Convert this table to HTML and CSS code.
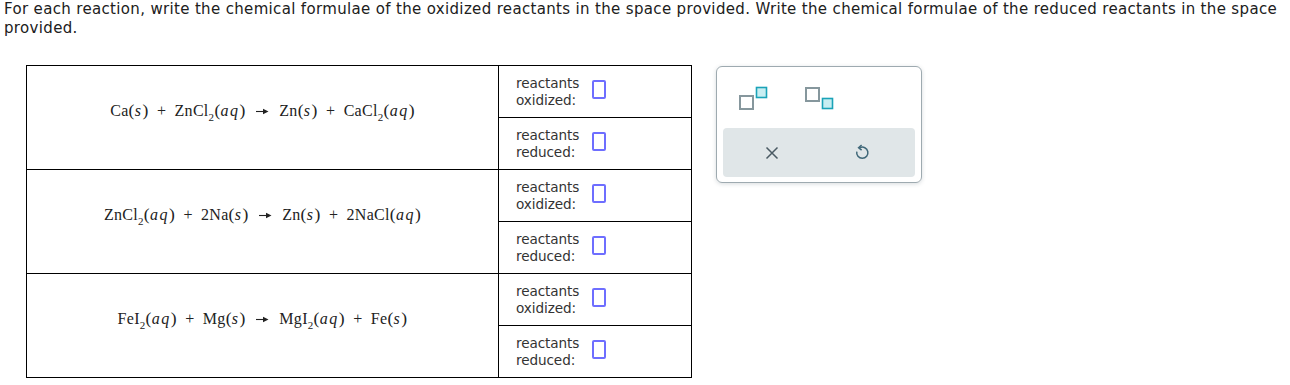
FILE: index.html
```html
<!DOCTYPE html>
<html>
<head>
<meta charset="utf-8">
<link rel="stylesheet" href="styles.css">
</head>
<body>
<p class="prompt">For each reaction, write the chemical formulae of the oxidized reactants in the space provided. Write the chemical formulae of the reduced reactants in the space provided.</p>
<div class="work">
  <table class="rx">
    <tr>
      <td class="eq" rowspan="2"><span class="m">Ca<span class="p">(</span><i>s</i><span class="p">)</span> <span class="op">+</span> ZnCl<sub>2</sub><span class="p">(</span><i>aq</i><span class="p">)</span> <svg class="arr" width="13" height="7" viewBox="0 0 13 7"><path d="M0 3.5 H8" stroke="#222" stroke-width="1.1"/><path d="M7 0.8 L12.5 3.5 L7 6.2 Z" fill="#222"/></svg> Zn<span class="p">(</span><i>s</i><span class="p">)</span> <span class="op">+</span> CaCl<sub>2</sub><span class="p">(</span><i>aq</i><span class="p">)</span></span></td>
      <td class="ans"><div class="lab">reactants<br>oxidized:</div><span class="box"></span></td>
    </tr>
    <tr>
      <td class="ans"><div class="lab">reactants<br>reduced:</div><span class="box"></span></td>
    </tr>
    <tr>
      <td class="eq" rowspan="2"><span class="m">ZnCl<sub>2</sub><span class="p">(</span><i>aq</i><span class="p">)</span> <span class="op">+</span> 2Na<span class="p">(</span><i>s</i><span class="p">)</span> <svg class="arr" width="13" height="7" viewBox="0 0 13 7"><path d="M0 3.5 H8" stroke="#222" stroke-width="1.1"/><path d="M7 0.8 L12.5 3.5 L7 6.2 Z" fill="#222"/></svg> Zn<span class="p">(</span><i>s</i><span class="p">)</span> <span class="op">+</span> 2NaCl<span class="p">(</span><i>aq</i><span class="p">)</span></span></td>
      <td class="ans"><div class="lab">reactants<br>oxidized:</div><span class="box"></span></td>
    </tr>
    <tr>
      <td class="ans"><div class="lab">reactants<br>reduced:</div><span class="box"></span></td>
    </tr>
    <tr>
      <td class="eq" rowspan="2"><span class="m">FeI<sub>2</sub><span class="p">(</span><i>aq</i><span class="p">)</span> <span class="op">+</span> Mg<span class="p">(</span><i>s</i><span class="p">)</span> <svg class="arr" width="13" height="7" viewBox="0 0 13 7"><path d="M0 3.5 H8" stroke="#222" stroke-width="1.1"/><path d="M7 0.8 L12.5 3.5 L7 6.2 Z" fill="#222"/></svg> MgI<sub>2</sub><span class="p">(</span><i>aq</i><span class="p">)</span> <span class="op">+</span> Fe<span class="p">(</span><i>s</i><span class="p">)</span></span></td>
      <td class="ans"><div class="lab">reactants<br>oxidized:</div><span class="box"></span></td>
    </tr>
    <tr>
      <td class="ans"><div class="lab">reactants<br>reduced:</div><span class="box"></span></td>
    </tr>
  </table>
  <div class="tools">
    <div class="icons">
      <svg class="ic" width="30" height="26" viewBox="0 0 30 26">
        <rect x="2" y="10" width="13" height="13" fill="#fff" stroke="#86979d" stroke-width="2"/>
        <rect x="18.5" y="1.5" width="10" height="10" fill="#c8eef2" stroke="#1ba3b8" stroke-width="1.6"/>
      </svg>
      <svg class="ic" width="30" height="26" viewBox="0 0 30 26">
        <rect x="2" y="2" width="13" height="13" fill="#fff" stroke="#86979d" stroke-width="2"/>
        <rect x="18.5" y="12.5" width="10" height="10" fill="#c8eef2" stroke="#1ba3b8" stroke-width="1.6"/>
      </svg>
    </div>
    <div class="actions">
      <svg width="16" height="16" viewBox="0 0 16 16">
        <path d="M2.5 2.5 L13.5 13.5 M13.5 2.5 L2.5 13.5" stroke="#4a5a63" stroke-width="1.5" fill="none"/>
      </svg>
      <svg width="18" height="18" viewBox="0 0 18 18">
        <path d="M7 3.6 A5.6 5.6 0 1 1 3.8 7.6" stroke="#3f6778" stroke-width="1.5" fill="none"/>
        <path d="M8.6 1 L5.6 3.7 L8.6 6.2" stroke="#3f6778" stroke-width="1.5" fill="none"/>
      </svg>
    </div>
  </div>
</div>
</body>
</html>
```
FILE: styles.css
```css
html, body {
  margin: 0;
  padding: 0;
  background: #fff;
}
body {
  padding: 0 4px;
  font-family: "DejaVu Sans", Verdana, sans-serif;
  color: #1d1d1d;
}
.prompt {
  margin: 0;
  font-size: 15px;
  line-height: 19px;
  letter-spacing: 0.34px;
  color: #202020;
}
.work {
  display: flex;
  align-items: flex-start;
  margin-top: 27px;
  padding-left: 22px;
}
.rx {
  border-collapse: collapse;
  border: 1px solid #000;
}
.rx td {
  border: 1px solid #000;
  padding: 0;
}
.eq {
  width: 471px;
  height: 103px;
  text-align: center;
  vertical-align: middle;
}
.m {
  font-family: "Liberation Serif", "Times New Roman", serif;
  font-size: 16px;
  letter-spacing: 0.3px;
  color: #222;
  position: relative;
  top: -7px;
}
.m i {
  font-style: italic;
  letter-spacing: 1.5px;
}
.m sub {
  font-size: 11px;
  vertical-align: -5px;
  line-height: 0;
}
.p {
  font-size: 17.5px;
}
.op {
  padding: 0 4px;
}
.arr {
  margin: 0 6px;
  vertical-align: 1px;
}
.ans {
  width: 192px;
  height: 51px;
  vertical-align: middle;
}
.ans .lab,
.ans .box {
  display: inline-block;
  vertical-align: middle;
}
.lab {
  font-size: 13.6px;
  line-height: 17px;
  color: #333;
  margin-left: 17px;
  letter-spacing: -0.1px;
  width: 72px;
}
.box {
  width: 10px;
  height: 15px;
  border: 2px solid #6e6eff;
  border-radius: 2px;
  margin-left: 4px;
  margin-top: -4px;
}
.tools {
  margin-left: 24px;
  margin-top: 1px;
  width: 206px;
  height: 117px;
  border: 1px solid #9eaab0;
  border-radius: 6px;
  box-shadow: 0 1px 4px rgba(40, 60, 70, 0.18);
  padding: 0 6px 5px;
  box-sizing: border-box;
  display: flex;
  flex-direction: column;
  justify-content: flex-end;
}
.icons {
  display: flex;
  gap: 36px;
  padding-left: 15px;
  margin-bottom: 16px;
}
.actions {
  height: 49px;
  background: #e0e6e8;
  border-radius: 4px;
  display: flex;
  align-items: center;
  justify-content: space-around;
  padding: 0 8px 0 4px;
}
```
